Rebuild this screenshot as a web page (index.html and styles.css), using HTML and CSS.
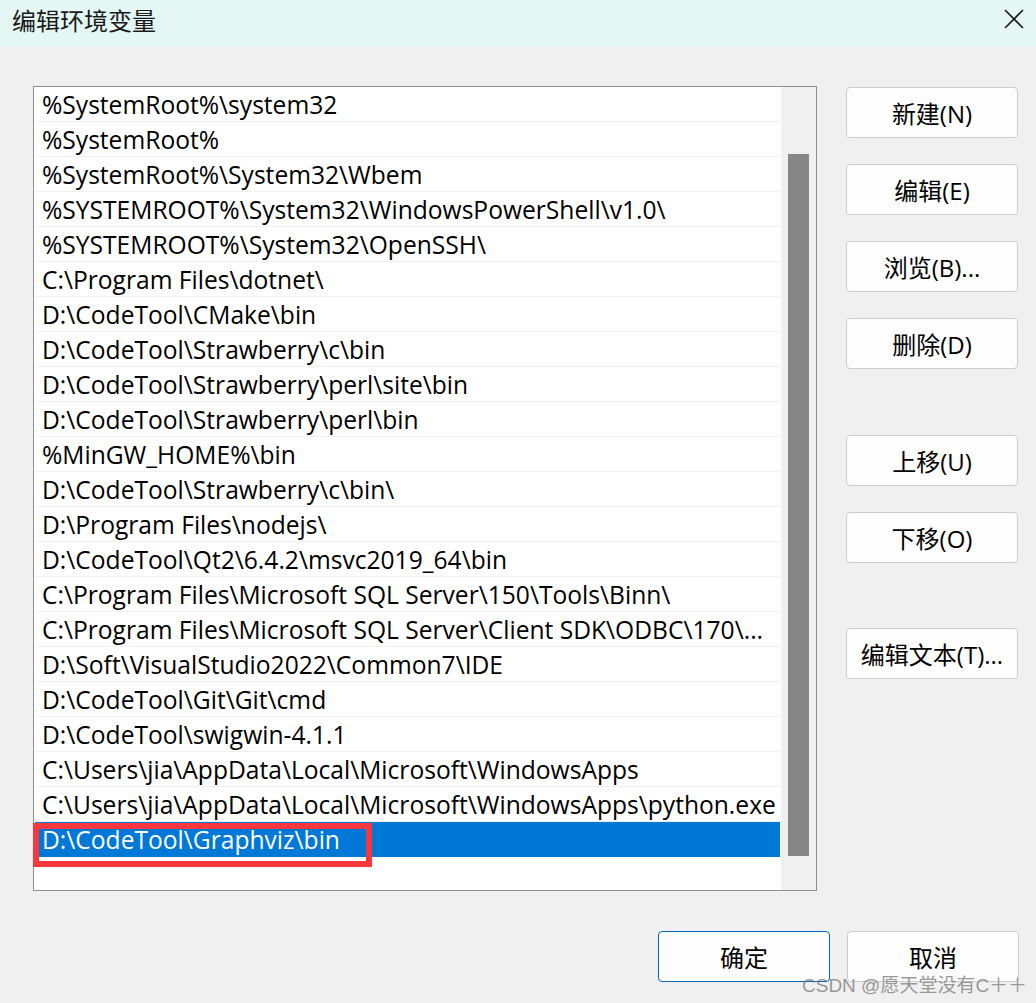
FILE: index.html
```html
<!DOCTYPE html>
<html lang="zh-CN">
<head>
<meta charset="utf-8">
<title>编辑环境变量</title>
<link rel="stylesheet" href="styles.css">
</head>
<body>
<div class="dialog">
  <div class="titlebar">
    <span class="title">编辑环境变量</span>
    <button class="close" aria-label="关闭">
      <svg width="20" height="20" viewBox="0 0 20 20"><path d="M1 1 L19 19 M19 1 L1 19" stroke="#1a1a1a" stroke-width="1.6" fill="none"/></svg>
    </button>
  </div>
  <div class="content">
    <div class="main">
      <div class="listbox">
        <ul class="list">
          <li>%SystemRoot%\system32</li>
          <li>%SystemRoot%</li>
          <li>%SystemRoot%\System32\Wbem</li>
          <li>%SYSTEMROOT%\System32\WindowsPowerShell\v1.0\</li>
          <li>%SYSTEMROOT%\System32\OpenSSH\</li>
          <li>C:\Program Files\dotnet\</li>
          <li>D:\CodeTool\CMake\bin</li>
          <li>D:\CodeTool\Strawberry\c\bin</li>
          <li>D:\CodeTool\Strawberry\perl\site\bin</li>
          <li>D:\CodeTool\Strawberry\perl\bin</li>
          <li>%MinGW_HOME%\bin</li>
          <li>D:\CodeTool\Strawberry\c\bin\</li>
          <li>D:\Program Files\nodejs\</li>
          <li>D:\CodeTool\Qt2\6.4.2\msvc2019_64\bin</li>
          <li>C:\Program Files\Microsoft SQL Server\150\Tools\Binn\</li>
          <li>C:\Program Files\Microsoft SQL Server\Client SDK\ODBC\170\...</li>
          <li>D:\Soft\VisualStudio2022\Common7\IDE</li>
          <li>D:\CodeTool\Git\Git\cmd</li>
          <li>D:\CodeTool\swigwin-4.1.1</li>
          <li>C:\Users\jia\AppData\Local\Microsoft\WindowsApps</li>
          <li>C:\Users\jia\AppData\Local\Microsoft\WindowsApps\python.exe</li>
          <li class="selected">D:\CodeTool\Graphviz\bin<span class="highlight"></span></li>
        </ul>
        <div class="scrollbar"><div class="thumb"></div></div>
      </div>
      <div class="actions">
        <div class="group">
          <button class="btn">新建(N)</button>
          <button class="btn">编辑(E)</button>
          <button class="btn">浏览(B)...</button>
          <button class="btn">删除(D)</button>
        </div>
        <div class="group move">
          <button class="btn">上移(U)</button>
          <button class="btn">下移(O)</button>
        </div>
        <div class="group text">
          <button class="btn">编辑文本(T)...</button>
        </div>
      </div>
    </div>
    <div class="footer">
      <button class="btn primary">确定</button>
      <button class="btn">取消</button>
    </div>
  </div>
  <div class="watermark">CSDN @愿天堂没有C＋＋</div>
</div>
</body>
</html>
```

FILE: styles.css
```css
* { box-sizing: border-box; }
html, body { margin: 0; padding: 0; }
body {
  background: #f0f0f0;
  font-family: "Open Sans", "Noto Sans CJK SC", sans-serif;
  color: #000;
  width: 1036px;
  height: 1003px;
  overflow: hidden;
}
.dialog { position: relative; height: 1003px; }
.titlebar {
  height: 46px;
  background: #e4f7f5;
  display: flex;
  align-items: center;
  justify-content: space-between;
  padding: 0 12px 0 12px;
}
.title {
  font-family: "Noto Sans CJK SC", sans-serif;
  font-size: 24px;
  color: #1a1a1a;
  margin-top: -8px;
}
.close {
  border: 0;
  background: transparent;
  padding: 0;
  margin-top: -8px;
  width: 20px;
  height: 20px;
  display: flex;
}
.content { padding: 40px 17px 0 33px; }
.main { display: flex; gap: 29px; }
.listbox {
  width: 784px;
  height: 805px;
  border: 1px solid #8f8f8f;
  background: #fff;
  display: flex;
}
.list {
  list-style: none;
  margin: 0;
  padding: 0 0 0 1px;
  width: 747px;
}
.list li {
  position: relative;
  height: 35px;
  line-height: 35px;
  padding-left: 7px;
  border-bottom: 1px solid #f0f0f0;
  font-size: 24.6px;
  white-space: nowrap;
  overflow: hidden;
}
.list li.selected {
  background: #0078d7;
  color: #fff;
  border-bottom: 0;
  overflow: visible;
}
.highlight {
  position: absolute;
  left: -2px;
  top: 1px;
  width: 339px;
  height: 44px;
  border: 6.5px solid #f8383c;
  pointer-events: none;
}
.scrollbar {
  width: 35px;
  background: #f0f0f0;
  padding: 67px 7px 0 7px;
  margin-left: 1px;
}
.thumb { height: 702px; background: #868686; }
.actions { display: flex; flex-direction: column; padding-top: 1px; }
.group { display: flex; flex-direction: column; gap: 26px; }
.group.move { margin-top: 66px; }
.group.text { margin-top: 65px; }
.btn {
  width: 172px;
  height: 51px;
  border: 1px solid #cccccc;
  border-radius: 4px;
  background: #fdfdfd;
  font-family: "Open Sans", "Noto Sans CJK SC", sans-serif;
  font-size: 24px;
  color: #000;
  padding: 0;
}
.footer {
  display: flex;
  justify-content: flex-end;
  gap: 17px;
  margin-top: 40px;
}
.btn.primary { border-color: #0067c0; }
.watermark {
  position: absolute;
  left: 802px;
  top: 970px;
  font-family: "Liberation Sans", "Noto Sans CJK SC", sans-serif;
  font-size: 19px;
  color: rgba(120,120,120,0.75);
  white-space: nowrap;
}
```
